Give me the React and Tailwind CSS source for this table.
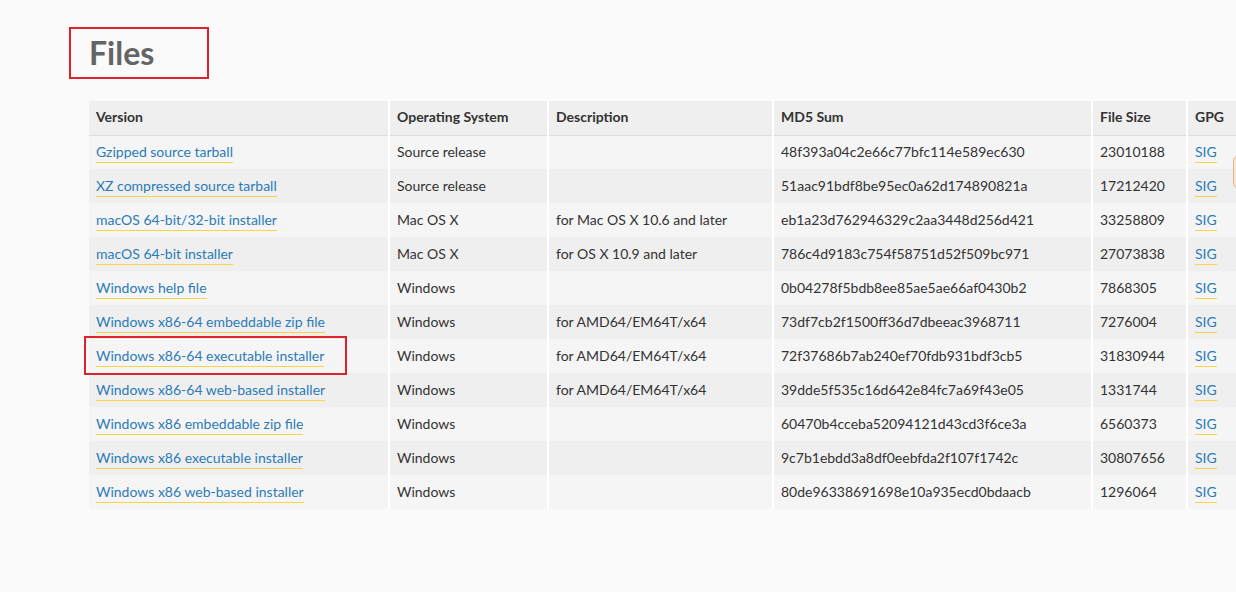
import React from "react";

const rows = [
  ["Gzipped source tarball", "Source release", "", "48f393a04c2e66c77bfc114e589ec630", "23010188"],
  ["XZ compressed source tarball", "Source release", "", "51aac91bdf8be95ec0a62d174890821a", "17212420"],
  ["macOS 64-bit/32-bit installer", "Mac OS X", "for Mac OS X 10.6 and later", "eb1a23d762946329c2aa3448d256d421", "33258809"],
  ["macOS 64-bit installer", "Mac OS X", "for OS X 10.9 and later", "786c4d9183c754f58751d52f509bc971", "27073838"],
  ["Windows help file", "Windows", "", "0b04278f5bdb8ee85ae5ae66af0430b2", "7868305"],
  ["Windows x86-64 embeddable zip file", "Windows", "for AMD64/EM64T/x64", "73df7cb2f1500ff36d7dbeeac3968711", "7276004"],
  ["Windows x86-64 executable installer", "Windows", "for AMD64/EM64T/x64", "72f37686b7ab240ef70fdb931bdf3cb5", "31830944"],
  ["Windows x86-64 web-based installer", "Windows", "for AMD64/EM64T/x64", "39dde5f535c16d642e84fc7a69f43e05", "1331744"],
  ["Windows x86 embeddable zip file", "Windows", "", "60470b4cceba52094121d43cd3f6ce3a", "6560373"],
  ["Windows x86 executable installer", "Windows", "", "9c7b1ebdd3a8df0eebfda2f107f1742c", "30807656"],
  ["Windows x86 web-based installer", "Windows", "", "80de96338691698e10a935ecd0bdaacb", "1296064"],
];

const headers = ["Version", "Operating System", "Description", "MD5 Sum", "File Size", "GPG"];

function Link({ children }) {
  return (
    <a className="text-[#2b7bb9] border-b border-[#ffd343] pb-[2px] cursor-pointer">{children}</a>
  );
}

export default function App() {
  return (
    <div
      className="relative w-[1236px] h-[592px] overflow-hidden bg-[#fafafa] text-[#333]"
      style={{ fontFamily: "Lato, 'Liberation Sans', sans-serif" }}
    >
      {/* Heading with annotation box */}
      <div className="ml-[69px] mt-[27px] w-[140px] h-[52px] border-2 border-[#e0202a] flex items-center pl-[18px]">
        <h1 className="text-[32px] font-bold text-[#646464] leading-none">Files</h1>
      </div>

      <table className="ml-[89px] mt-[22px] table-fixed border-collapse text-[14px]" style={{ width: 1200 }}>
        <colgroup>
          <col className="w-[300px]" />
          <col className="w-[159px]" />
          <col className="w-[225px]" />
          <col className="w-[319px]" />
          <col className="w-[95px]" />
          <col className="w-[102px]" />
        </colgroup>
        <thead>
          <tr className="bg-[#efefef] h-[34px] border-b border-[#dcdcdc]">
            {headers.map((h) => (
              <th key={h} className="text-left font-bold px-[7px] pb-[2px] border-r-2 border-white text-[#333]">
                {h}
              </th>
            ))}
          </tr>
        </thead>
        <tbody>
          {rows.map((r, i) => (
            <tr key={r[0]} className={`h-[34px] ${i % 2 === 0 ? "bg-[#f5f5f5]" : "bg-[#efefef]"}`}>
              <td className="px-[7px] pb-[2px] border-r-2 border-white">
                {i === 6 ? (
                  <span className="relative">
                    <Link>{r[0]}</Link>
                    <span className="absolute -left-[12px] -right-[23px] -top-[11px] -bottom-[11px] border-2 border-[#e0202a]" />
                  </span>
                ) : (
                  <Link>{r[0]}</Link>
                )}
              </td>
              <td className="px-[7px] pb-[2px] border-r-2 border-white">{r[1]}</td>
              <td className="px-[7px] pb-[2px] border-r-2 border-white">{r[2]}</td>
              <td className="px-[7px] pb-[2px] border-r-2 border-white">{r[3]}</td>
              <td className="px-[7px] pb-[2px] border-r-2 border-white">{r[4]}</td>
              <td className="px-[7px] pb-[2px] border-r-2 border-white">
                <Link>SIG</Link>
              </td>
            </tr>
          ))}
        </tbody>
      </table>

      {/* partially visible side button */}
      <div className="absolute left-[1233px] top-[155px] w-[20px] h-[34px] rounded-l-[6px] bg-[#f6e7d4] border border-[#e2b98a]" />
    </div>
  );
}
